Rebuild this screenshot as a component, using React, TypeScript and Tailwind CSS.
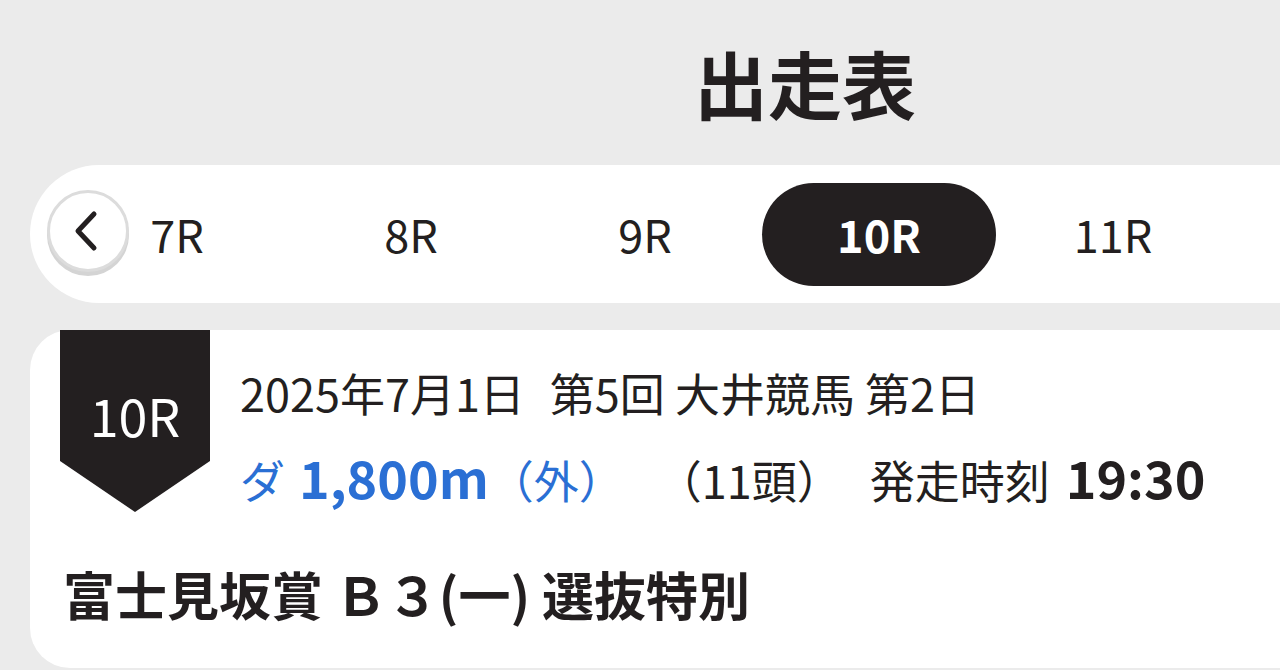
import React from 'react';

const races = ['7R', '8R', '9R', '10R', '11R'];

export default function App() {
  const current = '10R';

  return (
    <div
      className="min-h-screen w-full overflow-hidden bg-[#ebebeb] text-[#231f20]"
      style={{ fontFamily: '"Noto Sans CJK JP", "Noto Sans", sans-serif' }}
    >
      {/* Title */}
      <div className="h-[165px] pl-[694px] pt-[45px]">
        <h1 className="text-[74px] font-bold leading-none">出走表</h1>
      </div>

      {/* Race tabs */}
      <div className="relative ml-[30px] flex h-[138px] items-center rounded-l-full bg-white">
        <div className="flex pl-[30px]">
          {races.map((r) => (
            <div
              key={r}
              className={
                r === current
                  ? 'flex h-[103px] w-[234px] shrink-0 items-center justify-center rounded-full bg-[#231f20] text-[45px] font-bold text-white'
                  : 'flex h-[103px] w-[234px] shrink-0 items-center justify-center text-[45px]'
              }
            >
              {r}
            </div>
          ))}
        </div>
        <button className="absolute left-[17px] top-[25px] flex h-[82px] w-[82px] items-center justify-center rounded-full border-[3px] border-[#dcdcdc] bg-white shadow-[0_4px_0_#d4d4d4]">
          <svg width="36" height="42" viewBox="0 0 36 42" fill="none">
            <path d="M24 4 L8 21 L24 38" stroke="#231f20" strokeWidth="5" strokeLinecap="round" strokeLinejoin="round" />
          </svg>
        </button>
      </div>

      {/* Race card */}
      <div className="ml-[30px] mt-[27px] h-[338px] rounded-l-[40px] bg-white pl-[30px]">
        <div className="flex">
          <div className="flex h-[182px] w-[150px] shrink-0 justify-center bg-[#231f20] pt-[59px] text-[52px] leading-none text-white [clip-path:polygon(0_0,100%_0,100%_72%,50%_100%,0_72%)]">
            10R
          </div>
          <div className="ml-[30px] pt-[30px]">
            <div className="text-[45px] leading-[66px] whitespace-nowrap">
              <span className="mr-[25px]">2025年7月1日</span>
              <span>第5回 大井競馬 第2日</span>
            </div>
            <div className="mt-[18px] flex items-baseline whitespace-nowrap text-[45px] leading-[66px]">
              <span className="text-[#2a6fd4]">ダ</span>
              <span className="ml-[14px] text-[52px] font-bold text-[#2a6fd4]">1,800m</span>
              <span className="text-[#2a6fd4]">（外）</span>
              <span className="ml-[33px]">（11頭）</span>
              <span className="ml-[28px]">発走時刻</span>
              <span className="ml-[16px] text-[52px] font-bold">19:30</span>
            </div>
          </div>
        </div>
        <div className="mt-[43px] pl-[3px] text-[52px] font-bold leading-[75px] whitespace-nowrap">
          富士見坂賞 Ｂ３(一) 選抜特別
        </div>
      </div>
    </div>
  );
}
